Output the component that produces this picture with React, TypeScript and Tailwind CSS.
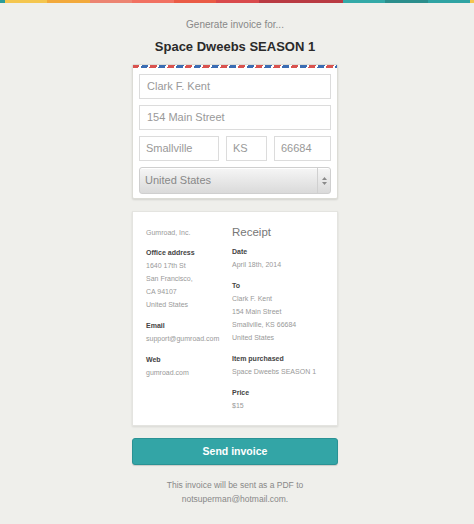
import React from "react";

const stripe = [
  "bg-[#2a9d9a] w-[5px]",
  "bg-[#f4c64e] flex-1",
  "bg-[#f2a93b] flex-1",
  "bg-[#ec8471] flex-1",
  "bg-[#f17161] flex-1",
  "bg-[#ea5b45] flex-1",
  "bg-[#d94a4c] flex-1",
  "bg-[#b93a42] flex-[2]",
  "bg-[#33a9a7] flex-1",
  "bg-[#2b8e8c] flex-1",
  "bg-[#2fa3a3] flex-1",
  "bg-[#f4c64e] w-[4px]",
];

function Field({ label, lines }: { label: string; lines: string[] }) {
  return (
    <div className="mb-[8px]">
      <div className="font-bold text-[#444] leading-[13px]">{label}</div>
      {lines.map((l) => (
        <div key={l} className="leading-[13px]">{l}</div>
      ))}
    </div>
  );
}

export default function App() {
  return (
    <div className="min-h-[524px] bg-[#efefeb] font-['Liberation_Sans',Arial,sans-serif]">
      <div className="flex h-[3px]">
        {stripe.map((c, i) => (
          <div key={i} className={c} />
        ))}
      </div>

      <div className="w-[470px]">
        <div className="text-center text-[10px] text-[#888] mt-[16px] leading-[12px]">Generate invoice for...</div>
        <div className="text-center text-[13px] font-bold text-[#2a2a2a] mt-[8px] leading-[15px]">Space Dweebs SEASON 1</div>

        <div className="mx-auto w-[206px] mt-[10px] bg-white border border-[#dcdcd6] shadow-[0_1px_2px_rgba(0,0,0,0.12)] rounded-[2px]">
          <div className="h-[3px] bg-[repeating-linear-gradient(115deg,#d9534f_0_6px,#fff_6px_8px,#3b6db3_8px_14px,#fff_14px_16px)]" />
          <div className="px-[6px] pt-[6px] pb-[4px] flex flex-col gap-[6px] text-[11px] text-[#999]">
            <div className="h-[25px] border border-[#dcdcdc] px-[7px] flex items-center">Clark F. Kent</div>
            <div className="h-[25px] border border-[#dcdcdc] px-[7px] flex items-center">154 Main Street</div>
            <div className="flex gap-[7px]">
              <div className="w-[80px] h-[25px] border border-[#dcdcdc] px-[6px] flex items-center">Smallville</div>
              <div className="w-[41px] h-[25px] border border-[#dcdcdc] px-[6px] flex items-center">KS</div>
              <div className="flex-1 h-[25px] border border-[#dcdcdc] px-[6px] flex items-center">66684</div>
            </div>
            <div className="h-[27px] border border-[#cfcfcf] rounded-[3px] bg-gradient-to-b from-[#f6f6f6] to-[#dadada] flex items-center shadow-[inset_0_1px_0_#fff]">
              <div className="flex-1 px-[5px] text-[#888]">United States</div>
              <div className="w-[13px] h-full border-l border-[#d0d0d0] flex flex-col items-center justify-center gap-[2px]">
                <svg width="5" height="3" viewBox="0 0 5 3"><path d="M0 3L2.5 0L5 3Z" fill="#8a8a8a" /></svg>
                <svg width="5" height="3" viewBox="0 0 5 3"><path d="M0 0L2.5 3L5 0Z" fill="#8a8a8a" /></svg>
              </div>
            </div>
          </div>
        </div>

        <div className="mx-auto w-[206px] mt-[12px] bg-white border border-[#e4e4e0] shadow-[0_1px_2px_rgba(0,0,0,0.1)] h-[215px] flex px-[13px] pt-[12px] text-[7px] text-[#999]">
          <div className="w-[86px]">
            <div className="leading-[13px] mt-[2px] mb-[7px]">Gumroad, Inc.</div>
            <Field label="Office address" lines={["1640 17th St", "San Francisco,", "CA 94107", "United States"]} />
            <Field label="Email" lines={["support@gumroad.com"]} />
            <Field label="Web" lines={["gumroad.com"]} />
          </div>
          <div className="flex-1">
            <div className="text-[11.5px] text-[#777] leading-[16px] mb-[5px]">Receipt</div>
            <Field label="Date" lines={["April 18th, 2014"]} />
            <Field label="To" lines={["Clark F. Kent", "154 Main Street", "Smallville, KS 66684", "United States"]} />
            <Field label="Item purchased" lines={["Space Dweebs SEASON 1"]} />
            <Field label="Price" lines={["$15"]} />
          </div>
        </div>

        <div className="mx-auto w-[206px] mt-[12px] h-[27px] rounded-[3px] bg-[#33a5a6] border border-[#2a9294] flex items-center justify-center text-white text-[10.5px] font-bold shadow-[0_1px_1px_rgba(0,0,0,0.15)]">
          Send invoice
        </div>

        <div className="text-center text-[8.5px] text-[#888] mt-[13px] leading-[14px]">
          This invoice will be sent as a PDF to
          <br />
          notsuperman@hotmail.com.
        </div>
      </div>
    </div>
  );
}
